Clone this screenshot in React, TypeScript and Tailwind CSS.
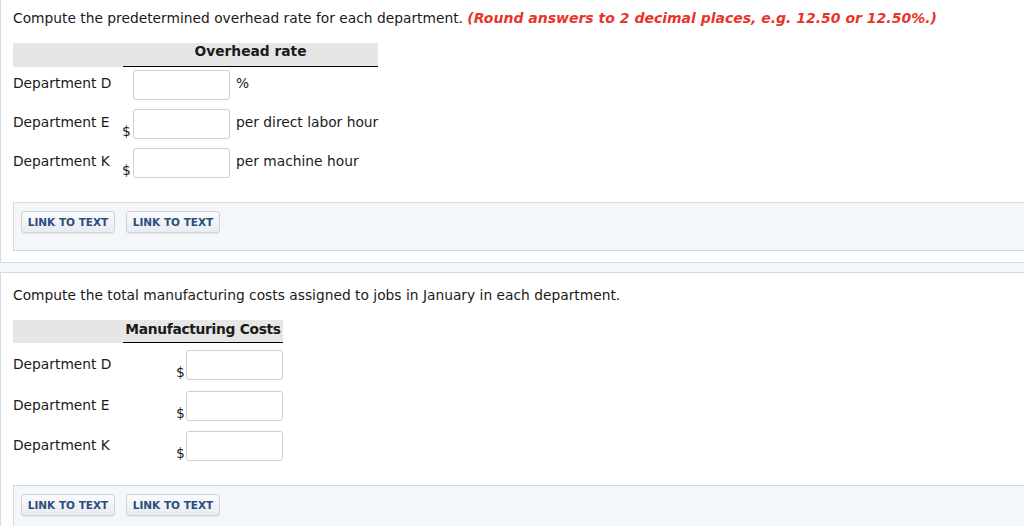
import React from 'react'

const font = { fontFamily: '"DejaVu Sans", Verdana, sans-serif' }

function LinkButton() {
  return (
    <button className="h-[22px] w-[94px] rounded-[3px] border border-[#cdd3db] bg-gradient-to-b from-[#fafbfc] to-[#e8ecf0] text-[10.5px] font-bold leading-[20px] text-[#2b4c7e] shadow-[0_1px_1px_rgba(0,0,0,0.06)]">
      LINK TO TEXT
    </button>
  )
}

function LinkBox({ className }: { className: string }) {
  return (
    <div className={`ml-[12px] border border-r-0 border-[#d3dae3] bg-[#f4f7fa] ${className}`}>
      <div className="flex gap-[11px] pl-[7px] pt-[8px]">
        <LinkButton />
        <LinkButton />
      </div>
    </div>
  )
}

function Input() {
  return <div className="h-[30px] w-[97px] rounded-[3px] border border-[#cfcfcf] bg-white" />
}

function RateRow({ label, prefix, unit }: { label: string; prefix?: string; unit: string }) {
  return (
    <div className="flex h-[30px]">
      <div className="w-[109px] pt-[5px] leading-[16px]">{label}</div>
      <div className="flex w-[11px] items-end leading-[16px]">{prefix}</div>
      <Input />
      <div className="pl-[6px] pt-[5px] leading-[16px]">{unit}</div>
    </div>
  )
}

function CostRow({ label }: { label: string }) {
  return (
    <div className="flex h-[30px]">
      <div className="w-[163px] pt-[6px] leading-[16px]">{label}</div>
      <div className="flex w-[10px] items-end leading-[16px]">$</div>
      <Input />
    </div>
  )
}

export default function App() {
  return (
    <div className="h-[526px] w-[1024px] overflow-hidden bg-[#f4f7fa] text-[13.8px] text-[#1a1a1a]" style={font}>
      {/* Parte 1 */}
      <div className="h-[263px] border-b border-l border-[#d3dae3] bg-white pl-[12px] pt-[10px]">
        <div className="leading-[16px]">
          Compute the predetermined overhead rate for each department.{' '}
          <span className="text-[14px] font-bold italic text-[#e8352b]">
            (Round answers to 2 decimal places, e.g. 12.50 or 12.50%.)
          </span>
        </div>

        <div className="mt-[17px] flex h-[24px] w-[365px] bg-[#e6e6e6]">
          <div className="w-[110px]" />
          <div className="flex-1 border-b border-black text-center font-bold leading-[16px]">
            Overhead rate
          </div>
        </div>

        <div className="mt-[3px] flex flex-col gap-[9px]">
          <RateRow label="Department D" unit="%" />
          <RateRow label="Department E" prefix="$" unit="per direct labor hour" />
          <RateRow label="Department K" prefix="$" unit="per machine hour" />
        </div>

        <div className="-ml-[12px] mt-[24px]">
          <LinkBox className="h-[49px]" />
        </div>
      </div>

      {/* Parte 2 */}
      <div className="mt-[9px] h-[260px] border-l border-t border-[#d3dae3] bg-white pl-[12px] pt-[14px]">
        <div className="leading-[16px]">
          Compute the total manufacturing costs assigned to jobs in January in each department.
        </div>

        <div className="mt-[17px] flex h-[23px] w-[270px] bg-[#e6e6e6]">
          <div className="w-[110px]" />
          <div className="flex w-[160px] justify-center whitespace-nowrap border-b border-black pt-[1px] font-bold leading-[16px] tracking-[-0.3px]">
            Manufacturing Costs
          </div>
        </div>

        <div className="mt-[7px] flex flex-col gap-[10.5px]">
          <CostRow label="Department D" />
          <CostRow label="Department E" />
          <CostRow label="Department K" />
        </div>

        <div className="-ml-[12px] mt-[24px]">
          <LinkBox className="h-[60px]" />
        </div>
      </div>
    </div>
  )
}
